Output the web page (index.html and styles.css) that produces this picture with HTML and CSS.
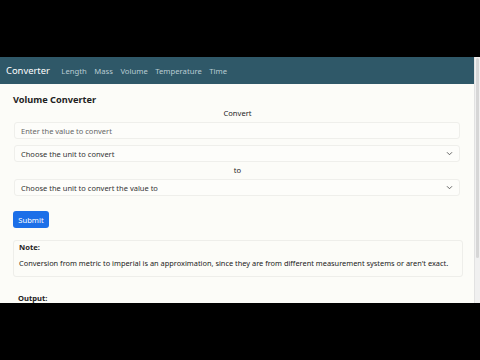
FILE: index.html
```html
<!DOCTYPE html>
<html>
<head>
<meta charset="utf-8">
<link rel="stylesheet" href="styles.css">
</head>
<body>
<div class="letterbox"></div>
<div class="screen">
  <div class="app">
    <nav class="navbar">
      <span class="brand">Converter</span>
      <a class="nav-link">Length</a>
      <a class="nav-link">Mass</a>
      <a class="nav-link">Volume</a>
      <a class="nav-link">Temperature</a>
      <a class="nav-link">Time</a>
    </nav>
    <main class="content">
      <h1 class="title">Volume Converter</h1>
      <div class="label">Convert</div>
      <div class="field input">Enter the value to convert</div>
      <div class="field select first">Choose the unit to convert
        <svg class="chev" viewBox="0 0 8 6" width="7" height="5"><path d="M1 1.5 L4 4.5 L7 1.5" fill="none" stroke="#555" stroke-width="1.1"/></svg>
      </div>
      <div class="label to">to</div>
      <div class="field select">Choose the unit to convert the value to
        <svg class="chev" viewBox="0 0 8 6" width="7" height="5"><path d="M1 1.5 L4 4.5 L7 1.5" fill="none" stroke="#555" stroke-width="1.1"/></svg>
      </div>
      <button class="btn">Submit</button>
      <div class="note">
        <div class="note-title">Note:</div>
        <div class="note-text">Conversion from metric to imperial is an approximation, since they are from different measurement systems or aren't exact.</div>
      </div>
      <div class="output">Output:</div>
    </main>
  </div>
  <div class="scrollbar"><div class="thumb"></div></div>
</div>
<div class="letterbox"></div>
</body>
</html>
```
FILE: styles.css
```css
html, body {
  margin: 0;
  padding: 0;
  background: #000;
  width: 480px;
  height: 360px;
  overflow: hidden;
  font-family: "Noto Sans", "Open Sans", sans-serif;
}
.letterbox {
  height: 57px;
  background: #000;
}
.screen {
  height: 246px;
  display: flex;
  overflow: hidden;
  background: #fcfcf8;
}
.app {
  flex: 1;
  min-width: 0;
}
.navbar {
  height: 27px;
  background: #2f5868;
  display: flex;
  align-items: center;
  padding: 0 6px;
}
.brand {
  color: #fff;
  font-size: 9.4px;
  margin-right: 11.5px;
}
.nav-link {
  color: #b9ccd3;
  font-size: 7.7px;
  margin-right: 7.5px;
}
.content {
  padding: 8px 12px 0 13px;
}
.title {
  margin: 0 0 1px 0;
  font-size: 9.2px;
  font-weight: bold;
  color: #222;
  line-height: 15px;
}
.label {
  text-align: center;
  font-size: 7.6px;
  color: #222;
  line-height: 10px;
  margin-bottom: 4px;
}
.field {
  margin-left: 1px;
  width: 446px;
  height: 17px;
  border: 1px solid #efefeb;
  border-radius: 3px;
  background: #fdfdfa;
  box-sizing: border-box;
  font-size: 7.5px;
  color: #333;
  display: flex;
  align-items: center;
  padding-left: 6px;
}
.input {
  color: #666;
  margin-bottom: 6px;
}
.select {
  justify-content: space-between;
  padding-right: 6px;
}
.select.first {
  margin-bottom: 3px;
}
.chev {
  display: block;
}
.btn {
  display: block;
  margin-top: 15px;
  background: #1c6fe8;
  color: #fff;
  border: none;
  border-radius: 3px;
  width: 36px;
  height: 17px;
  font-family: inherit;
  font-size: 7.6px;
  padding: 0;
}
.note {
  margin-top: 12px;
  width: 450px;
  box-sizing: border-box;
  border: 1px solid #eeeeea;
  border-radius: 3px;
  padding: 0 5px 7px 5px;
}
.note-title {
  font-size: 7.6px;
  font-weight: bold;
  color: #222;
  line-height: 12px;
}
.note-text {
  margin-top: 4px;
  font-size: 7.4px;
  color: #222;
  line-height: 12px;
  white-space: nowrap;
}
.output {
  margin-top: 16px;
  padding-left: 5px;
  font-size: 7.6px;
  line-height: 10px;
  font-weight: bold;
  color: #222;
}
.scrollbar {
  width: 6px;
  background: #f0f0f0;
  border-left: 1px solid #e2e2e2;
  box-sizing: border-box;
}
.thumb {
  margin: 1px 1px 0 1px;
  height: 200px;
  background: #d6d6d6;
  border-radius: 2px;
}
```
